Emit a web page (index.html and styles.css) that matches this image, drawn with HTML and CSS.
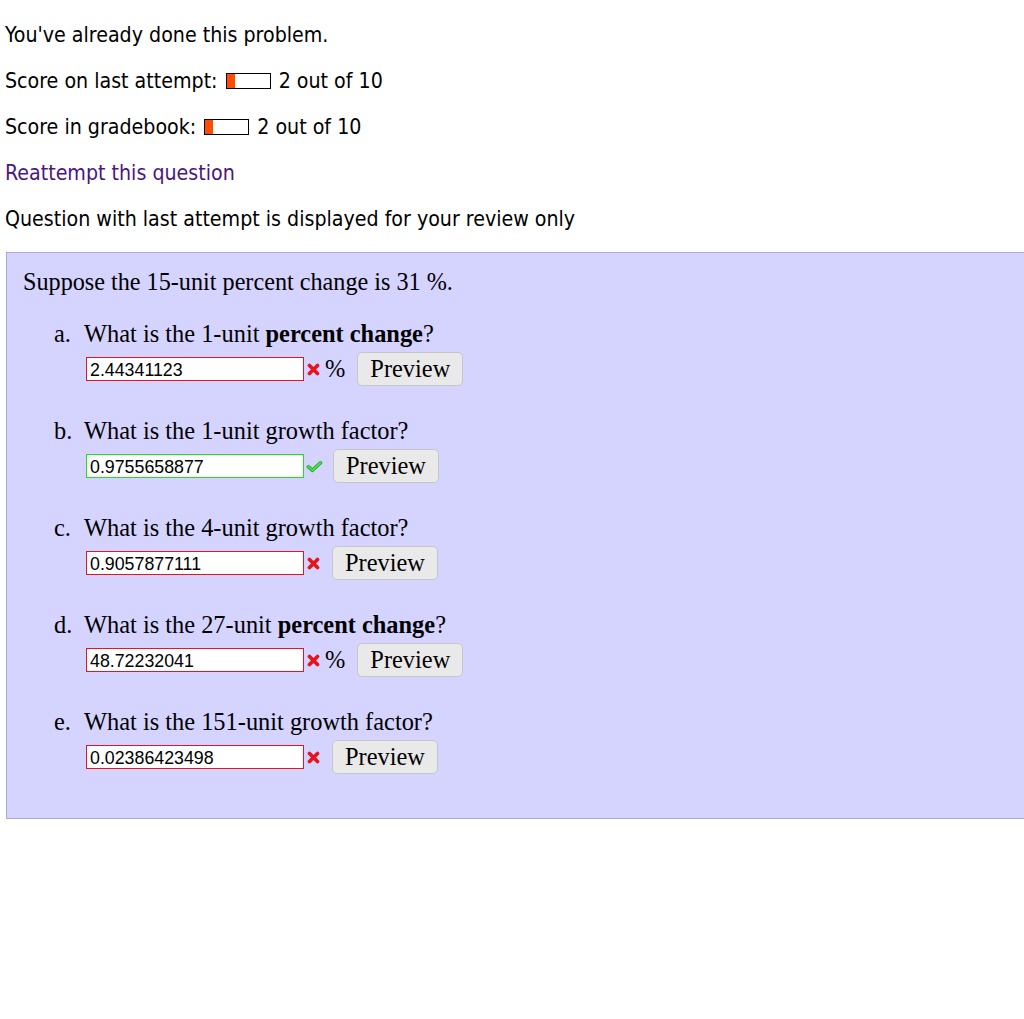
FILE: index.html
```html
<!DOCTYPE html>
<html>
<head>
<meta charset="utf-8">
<title>Question review</title>
<link rel="stylesheet" href="styles.css">
</head>
<body>
<div class="page">
  <p class="line first">You've already done this problem.</p>
  <p class="line">Score on last attempt: <span class="scorebar"><span class="scorefill"></span></span> 2 out of 10</p>
  <p class="line">Score in gradebook: <span class="scorebar"><span class="scorefill"></span></span> 2 out of 10</p>
  <p class="line"><a class="link" href="#">Reattempt this question</a></p>
  <p class="line">Question with last attempt is displayed for your review only</p>

  <div class="question">
    <p class="intro">Suppose the 15-unit percent change is 31 %.</p>
    <div class="parts">
      <div class="part">
        <span class="marker">a.</span>
        <div class="body">
          <div class="prompt">What is the 1-unit <b>percent change</b>?</div>
          <div class="row">
            <span class="answer wrong">2.44341123</span>
            <span class="icon"><svg width="13" height="13" viewBox="0 0 12 12"><path d="M2.3 2.3 L9.7 9.7 M9.7 2.3 L2.3 9.7" stroke="#e8141c" stroke-width="3.4" stroke-linecap="round"/></svg></span>
            <span class="unit">%</span>
            <button class="preview">Preview</button>
          </div>
        </div>
      </div>
      <div class="part">
        <span class="marker">b.</span>
        <div class="body">
          <div class="prompt">What is the 1-unit growth factor?</div>
          <div class="row">
            <span class="answer right">0.9755658877</span>
            <span class="icon check"><svg width="17" height="13" viewBox="0 0 17 13"><path d="M2.5 6.8 L6.5 10.3 L14.5 2.8" fill="none" stroke="#23b026" stroke-width="3.6" stroke-linecap="round" stroke-linejoin="round"/><path d="M2.5 6.8 L6.5 10.3 L14.5 2.8" fill="none" stroke="#52ea52" stroke-width="1.5" stroke-linecap="round" stroke-linejoin="round"/></svg></span>
            <button class="preview">Preview</button>
          </div>
        </div>
      </div>
      <div class="part">
        <span class="marker">c.</span>
        <div class="body">
          <div class="prompt">What is the 4-unit growth factor?</div>
          <div class="row">
            <span class="answer wrong">0.9057877111</span>
            <span class="icon"><svg width="13" height="13" viewBox="0 0 12 12"><path d="M2.3 2.3 L9.7 9.7 M9.7 2.3 L2.3 9.7" stroke="#e8141c" stroke-width="3.4" stroke-linecap="round"/></svg></span>
            <button class="preview">Preview</button>
          </div>
        </div>
      </div>
      <div class="part">
        <span class="marker">d.</span>
        <div class="body">
          <div class="prompt">What is the 27-unit <b>percent change</b>?</div>
          <div class="row">
            <span class="answer wrong">48.72232041</span>
            <span class="icon"><svg width="13" height="13" viewBox="0 0 12 12"><path d="M2.3 2.3 L9.7 9.7 M9.7 2.3 L2.3 9.7" stroke="#e8141c" stroke-width="3.4" stroke-linecap="round"/></svg></span>
            <span class="unit">%</span>
            <button class="preview">Preview</button>
          </div>
        </div>
      </div>
      <div class="part">
        <span class="marker">e.</span>
        <div class="body">
          <div class="prompt">What is the 151-unit growth factor?</div>
          <div class="row">
            <span class="answer wrong">0.02386423498</span>
            <span class="icon"><svg width="13" height="13" viewBox="0 0 12 12"><path d="M2.3 2.3 L9.7 9.7 M9.7 2.3 L2.3 9.7" stroke="#e8141c" stroke-width="3.4" stroke-linecap="round"/></svg></span>
            <button class="preview">Preview</button>
          </div>
        </div>
      </div>
    </div>
  </div>
</div>
</body>
</html>
```
FILE: styles.css
```css
html, body {
  margin: 0;
  padding: 0;
  background: #ffffff;
  overflow-x: hidden;
}

.page {
  padding: 0 0 0 5px;
  font-family: "DejaVu Sans Condensed", "DejaVu Sans", sans-serif;
  font-stretch: semi-condensed;
  font-size: 21.2px;
  color: #000;
}

.line {
  margin: 20px 0 0 0;
  line-height: 26px;
  white-space: nowrap;
}

.line.first {
  margin-top: 22px;
}

.scorebar {
  display: inline-block;
  vertical-align: -1px;
  width: 43px;
  height: 14px;
  margin-left: 2px;
  margin-right: 2px;
  border: 1.5px solid #000;
  background: #fff;
}

.scorefill {
  display: block;
  width: 8px;
  height: 100%;
  background: #ff4d00;
}

.link {
  color: #4b1582;
  text-decoration: none;
}

.question {
  margin: 20px -40px 0 1px;
  background: #d5d3ff;
  border: 1px solid #aba8d8;
  padding: 16px 16px 44px 16px;
  font-family: "Liberation Serif", "Times New Roman", serif;
  font-size: 24.4px;
  color: #000;
}

.intro {
  margin: 0;
  line-height: 26px;
  font-size: 24.2px;
}

.parts {
  display: flex;
  flex-direction: column;
  gap: 32px;
  margin: 26px 0 0 0;
  padding-left: 31px;
}

.part {
  display: grid;
  grid-template-columns: 30px auto;
}

.marker {
  line-height: 26px;
}

.prompt {
  line-height: 26px;
}

.row {
  display: flex;
  align-items: center;
  height: 34px;
  margin-top: 5px;
  margin-left: 2px;
}

.answer {
  box-sizing: border-box;
  width: 218px;
  height: 24px;
  background: #fff;
  border: 1px solid #e8141c;
  font-family: "Liberation Sans", Arial, sans-serif;
  font-size: 17.8px;
  line-height: 25px;
  padding: 0 3px;
}

.answer.right {
  border-color: #1ee01e;
}

.icon {
  display: flex;
  align-items: center;
  margin-left: 3px;
}

.icon.check {
  margin-left: 2px;
}

.unit {
  margin-left: 5px;
  font-size: 24.4px;
}

.preview {
  margin-left: 12px;
  box-sizing: border-box;
  height: 34px;
  padding: 0 12px;
  background: #e9e9e9;
  border: 1px solid #c6c6c6;
  border-radius: 5px;
  font-family: "Liberation Serif", "Times New Roman", serif;
  font-size: 24.4px;
  color: #000;
}

.icon.check + .preview {
  margin-left: 10px;
}
```
